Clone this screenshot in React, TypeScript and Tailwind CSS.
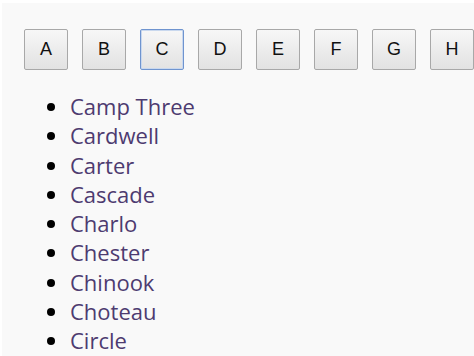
import { useState } from 'react';

const letters = ['A', 'B', 'C', 'D', 'E', 'F', 'G', 'H'];

const towns = [
  'Camp Three',
  'Cardwell',
  'Carter',
  'Cascade',
  'Charlo',
  'Chester',
  'Chinook',
  'Choteau',
  'Circle',
];

export default function App() {
  const [active, setActive] = useState('C');

  return (
    <div className="h-[356px] w-[474px] overflow-hidden bg-white pl-[2px] pt-[3px]">
      <div className="h-full bg-[#f9f9f9] pl-[22px] pt-[26px]">
        {/* Letter picker */}
        <div className="flex flex-nowrap gap-[14px]">
          {letters.map((l) => (
            <button
              key={l}
              onClick={() => setActive(l)}
              className={
                'h-[41px] w-[44px] flex-shrink-0 rounded-[2px] border bg-gradient-to-b from-[#f7f7f7] to-[#e2e2e2] text-[18px] text-[#111] font-["Liberation_Sans",Arial,sans-serif] ' +
                (active === l ? 'border-[#6f94cf] shadow-[inset_0_0_0_1px_#c9d8ee]' : 'border-[#a8a8a8]')
              }
            >
              {l}
            </button>
          ))}
        </div>

        {/* Town list */}
        <ul className="mt-[22px] list-disc pl-[46px] font-['Open_Sans',sans-serif] text-[22px] leading-[29.25px] text-[#4d3b70] marker:text-black">
          {towns.map((t) => (
            <li key={t}>
              <a href="#" className="text-[#4d3b70]">
                {t}
              </a>
            </li>
          ))}
        </ul>
      </div>
    </div>
  );
}
